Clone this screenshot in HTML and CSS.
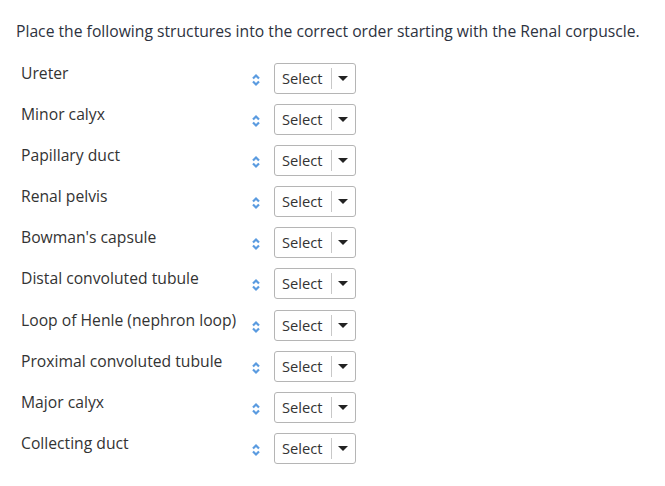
FILE: index.html
```html
<!DOCTYPE html>
<html>
<head>
<meta charset="utf-8">
<link rel="stylesheet" href="styles.css">
</head>
<body>
<div class="question">
  <p class="prompt">Place the following structures into the correct order starting with the Renal corpuscle.</p>
  <div class="rows">
    <div class="row"><div class="label">Ureter</div><span class="handle"><svg width="8" height="14" viewBox="0 0 8 14"><path d="M1 5.5 L4 2.5 L7 5.5" /><path d="M1 8.5 L4 11.5 L7 8.5" /></svg></span><div class="select"><span class="sel-text">Select</span><span class="sel-arrow"></span></div></div>
    <div class="row"><div class="label">Minor calyx</div><span class="handle"><svg width="8" height="14" viewBox="0 0 8 14"><path d="M1 5.5 L4 2.5 L7 5.5" /><path d="M1 8.5 L4 11.5 L7 8.5" /></svg></span><div class="select"><span class="sel-text">Select</span><span class="sel-arrow"></span></div></div>
    <div class="row"><div class="label">Papillary duct</div><span class="handle"><svg width="8" height="14" viewBox="0 0 8 14"><path d="M1 5.5 L4 2.5 L7 5.5" /><path d="M1 8.5 L4 11.5 L7 8.5" /></svg></span><div class="select"><span class="sel-text">Select</span><span class="sel-arrow"></span></div></div>
    <div class="row"><div class="label">Renal pelvis</div><span class="handle"><svg width="8" height="14" viewBox="0 0 8 14"><path d="M1 5.5 L4 2.5 L7 5.5" /><path d="M1 8.5 L4 11.5 L7 8.5" /></svg></span><div class="select"><span class="sel-text">Select</span><span class="sel-arrow"></span></div></div>
    <div class="row"><div class="label">Bowman's capsule</div><span class="handle"><svg width="8" height="14" viewBox="0 0 8 14"><path d="M1 5.5 L4 2.5 L7 5.5" /><path d="M1 8.5 L4 11.5 L7 8.5" /></svg></span><div class="select"><span class="sel-text">Select</span><span class="sel-arrow"></span></div></div>
    <div class="row"><div class="label">Distal convoluted tubule</div><span class="handle"><svg width="8" height="14" viewBox="0 0 8 14"><path d="M1 5.5 L4 2.5 L7 5.5" /><path d="M1 8.5 L4 11.5 L7 8.5" /></svg></span><div class="select"><span class="sel-text">Select</span><span class="sel-arrow"></span></div></div>
    <div class="row"><div class="label">Loop of Henle (nephron loop)</div><span class="handle"><svg width="8" height="14" viewBox="0 0 8 14"><path d="M1 5.5 L4 2.5 L7 5.5" /><path d="M1 8.5 L4 11.5 L7 8.5" /></svg></span><div class="select"><span class="sel-text">Select</span><span class="sel-arrow"></span></div></div>
    <div class="row"><div class="label">Proximal convoluted tubule</div><span class="handle"><svg width="8" height="14" viewBox="0 0 8 14"><path d="M1 5.5 L4 2.5 L7 5.5" /><path d="M1 8.5 L4 11.5 L7 8.5" /></svg></span><div class="select"><span class="sel-text">Select</span><span class="sel-arrow"></span></div></div>
    <div class="row"><div class="label">Major calyx</div><span class="handle"><svg width="8" height="14" viewBox="0 0 8 14"><path d="M1 5.5 L4 2.5 L7 5.5" /><path d="M1 8.5 L4 11.5 L7 8.5" /></svg></span><div class="select"><span class="sel-text">Select</span><span class="sel-arrow"></span></div></div>
    <div class="row"><div class="label">Collecting duct</div><span class="handle"><svg width="8" height="14" viewBox="0 0 8 14"><path d="M1 5.5 L4 2.5 L7 5.5" /><path d="M1 8.5 L4 11.5 L7 8.5" /></svg></span><div class="select"><span class="sel-text">Select</span><span class="sel-arrow"></span></div></div>
  </div>
</div>
</body>
</html>
```
FILE: styles.css
```css
html, body {
  margin: 0;
  padding: 0;
  background: #fff;
}
body {
  font-family: "Open Sans", "Noto Sans", sans-serif;
  color: #333;
}
.question {
  padding: 20px 0 0 16px;
}
.prompt {
  margin: 0;
  font-size: 15.7px;
  line-height: 22px;
  color: #2d3240;
}
.rows {
  display: flex;
  flex-direction: column;
  padding-left: 5px;
  margin-top: 20px;
}
.row {
  display: flex;
  align-items: flex-start;
  height: 41.1px;
}
.label {
  width: 227px;
  font-size: 15.7px;
  line-height: 22px;
  color: #333;
}
.handle {
  width: 16px;
  margin-right: 10px;
  display: flex;
  justify-content: center;
  padding-top: 11px;
}
.handle svg path {
  fill: none;
  stroke: #5a9be0;
  stroke-width: 2.2;
  stroke-linecap: butt;
  stroke-linejoin: miter;
}
.select {
  margin-top: 1px;
  width: 80px;
  height: 29px;
  border: 1px solid #b5b5b5;
  border-radius: 3px;
  display: flex;
  align-items: center;
  box-sizing: content-box;
}
.sel-text {
  font-size: 14.7px;
  padding-left: 7px;
  width: 49px;
  color: #333;
  height: 21px;
  line-height: 21px;
  border-right: 1px solid #c8c8c8;
}
.sel-arrow {
  margin-left: 6px;
  width: 0;
  height: 0;
  border-left: 5px solid transparent;
  border-right: 5px solid transparent;
  border-top: 5px solid #222;
}
```
